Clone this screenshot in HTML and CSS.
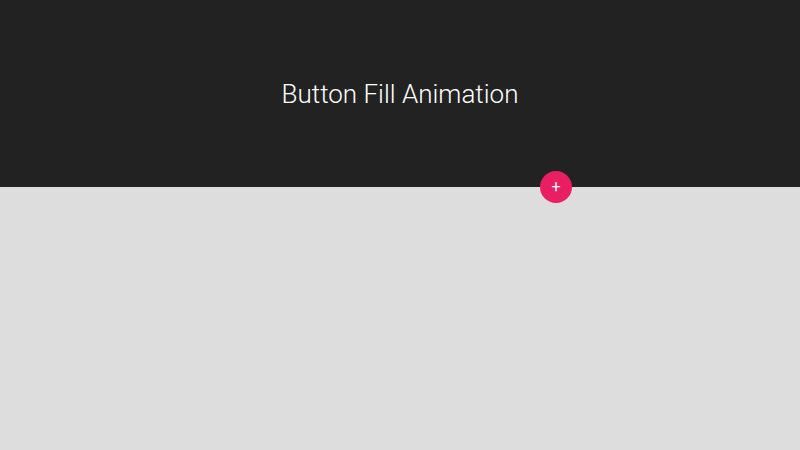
FILE: index.html
```html
<!DOCTYPE html>
<html lang="en">

<head>
    <meta charset="UTF-8">
    <meta name="viewport" content="width=device-width, initial-scale=1.0">
    <title>Button Fill Animation</title>
    <link rel="stylesheet" href="styles.css">
</head>

<body>
    <div class="header">
        <h1>Button Fill Animation</h1>
        <button class="fab">+</button>
    </div>
    <div class="content"></div>
</body>

</html>
```

FILE: styles.css
```css
body {
    margin: 0;
    height: 100vh;
    background: #dddddd;
    font-family: Roboto, "Noto Sans", sans-serif;
    overflow: hidden;
}

.header {
    position: relative;
    height: 187px;
    background: #222222;
    display: flex;
    align-items: center;
    justify-content: center;
}

.header h1 {
    margin: 0;
    color: #ffffff;
    font-size: 26px;
    font-weight: 300;
}

/* round add button sitting on the header edge */
.fab {
    position: absolute;
    left: calc(50% + 140px);
    bottom: -16px;
    width: 32px;
    height: 32px;
    padding: 0;
    border: none;
    border-radius: 50%;
    background: #e91e63;
    color: #fff;
    font-family: Roboto, sans-serif;
    font-size: 16px;
    font-weight: 400;
    line-height: 32px;
    cursor: pointer;
}
```
